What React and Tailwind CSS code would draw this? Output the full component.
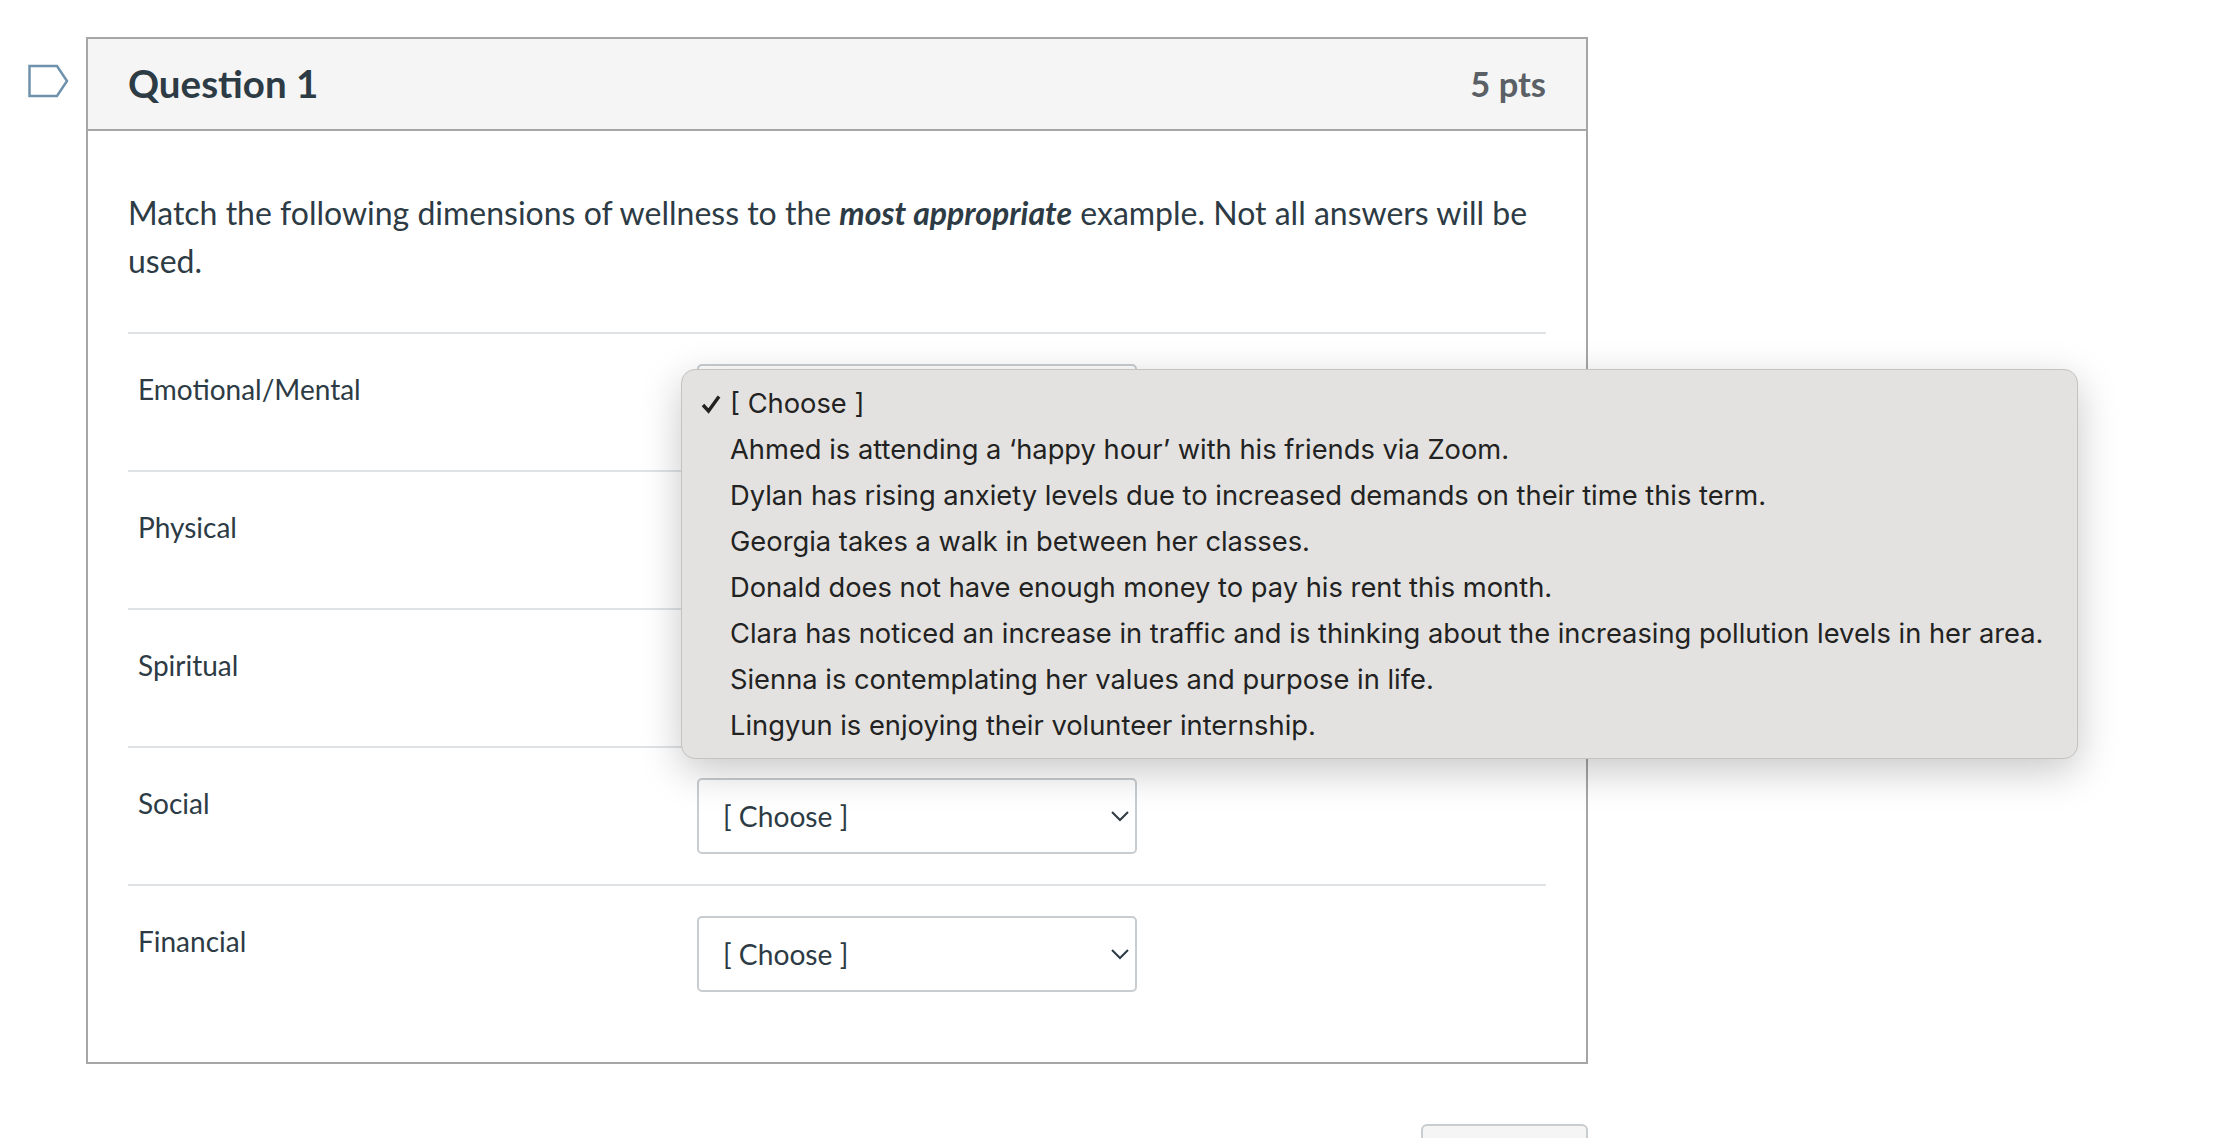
import React from 'react';

const rows = ['Emotional/Mental', 'Physical', 'Spiritual', 'Social', 'Financial'];

const options = [
  '[ Choose ]',
  'Ahmed is attending a ‘happy hour’ with his friends via Zoom.',
  'Dylan has rising anxiety levels due to increased demands on their time this term.',
  'Georgia takes a walk in between her classes.',
  'Donald does not have enough money to pay his rent this month.',
  'Clara has noticed an increase in traffic and is thinking about the increasing pollution levels in her area.',
  'Sienna is contemplating her values and purpose in life.',
  'Lingyun is enjoying their volunteer internship.',
];

const ChoiceSelect = () => (
  <div className="flex h-[76px] w-[440px] items-center justify-between rounded-[5px] border-2 border-[#c7cdd1] bg-white pl-[24px] pr-[6px] text-[28.2px] text-[#2d3b45]">
    <span>[ Choose ]</span>
    <svg width="18" height="11" viewBox="0 0 18 11" fill="none">
      <path d="M1 1 L9 9 L17 1" stroke="#2d3b45" strokeWidth="2" />
    </svg>
  </div>
);

const App = () => {
  return (
    <div className="relative h-[1138px] overflow-hidden bg-white font-['Lato',sans-serif] text-[#2d3b45]">
      <div className="flex pl-[28px] pt-[37px]">
        <svg className="mt-[27px] mr-[17px] shrink-0" width="41" height="34" viewBox="0 0 41 34" fill="none">
          <path d="M1.5 2 H29 L39 17 L29 32 H1.5 Z" stroke="#6f92ac" strokeWidth="2.5" />
        </svg>
        <div className="w-[1502px]">
          <div className="border-2 border-[#a6a6a6]">
            <div className="flex h-[92px] items-center justify-between border-b-2 border-[#a6a6a6] bg-[#f5f5f5] px-[40px]">
              <h2 className="text-[38.5px] font-bold">Question 1</h2>
              <span className="text-[34.5px] font-bold text-[#5a6066]">5 pts</span>
            </div>
            <div className="px-[40px] pb-[40px] pt-[58px]">
              <p className="text-[32px] leading-[48px]">
                Match the following dimensions of wellness to the <strong><em>most appropriate</em></strong> example. Not all answers will be used.
              </p>
              <div className="mt-[47px]">
                {rows.map((row) => (
                  <div key={row} className="flex h-[138px] border-t-2 border-[#e0e3e5] pt-[30px]">
                    <div className="w-[569px] pl-[10px] pt-[5px] text-[28px] leading-[40px]">{row}</div>
                    <ChoiceSelect />
                  </div>
                ))}
              </div>
            </div>
          </div>
          <div className="mt-[60px] flex justify-end">
            <div className="h-[60px] w-[167px] rounded-[6px] border-2 border-[#c7cdd1] bg-[#f5f5f5]" />
          </div>
        </div>
      </div>

      <div className="absolute left-[681px] top-[369px] h-[390px] w-[1397px] rounded-[14px] border border-[#c4c3c1] bg-[#e3e2e0] py-[11px] font-['Inter',sans-serif] text-[27.3px] leading-[46px] text-[#222222] shadow-[0_12px_40px_rgba(0,0,0,0.22)]">
        {options.map((option, i) => (
          <div key={option} className="flex items-center whitespace-nowrap">
            <span className="flex w-[48px] shrink-0 justify-end pr-[9px]">
              {i === 0 && (
                <svg width="20" height="20" viewBox="0 0 20 20" fill="none">
                  <path d="M2 11 L7.5 17 L18 2.5" stroke="#222222" strokeWidth="3.4" />
                </svg>
              )}
            </span>
            <span>{option}</span>
          </div>
        ))}
      </div>
    </div>
  );
};

export default App;
